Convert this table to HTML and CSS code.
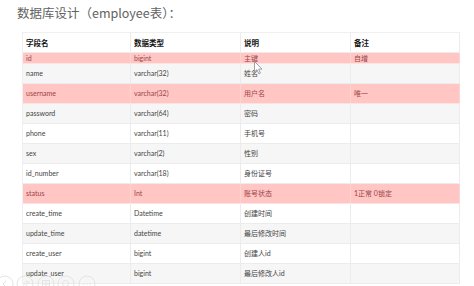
FILE: index.html
```html
<!DOCTYPE html>
<html lang="zh">
<head>
<meta charset="utf-8">
<title>数据库设计</title>
<link rel="stylesheet" href="styles.css">
</head>
<body>
<div class="page">
  <h1 class="title">数据库设计（employee表）：</h1>
  <table class="schema">
    <colgroup><col class="c1"><col class="c2"><col class="c3"><col class="c4"></colgroup>
    <thead>
      <tr class="head"><th>字段名</th><th>数据类型</th><th>说明</th><th>备注</th></tr>
    </thead>
    <tbody>
      <tr class="hl short"><td>id</td><td>bigint</td><td>主键</td><td>自增</td></tr>
      <tr class="alt"><td>name</td><td>varchar(32)</td><td>姓名</td><td></td></tr>
      <tr class="hl"><td>username</td><td>varchar(32)</td><td>用户名</td><td>唯一</td></tr>
      <tr class="alt"><td>password</td><td>varchar(64)</td><td>密码</td><td></td></tr>
      <tr><td>phone</td><td>varchar(11)</td><td>手机号</td><td></td></tr>
      <tr class="alt"><td>sex</td><td>varchar(2)</td><td>性别</td><td></td></tr>
      <tr><td>id_number</td><td>varchar(18)</td><td>身份证号</td><td></td></tr>
      <tr class="hl"><td>status</td><td>Int</td><td>账号状态</td><td>1正常 0锁定</td></tr>
      <tr><td>create_time</td><td>Datetime</td><td>创建时间</td><td></td></tr>
      <tr class="alt"><td>update_time</td><td>datetime</td><td>最后修改时间</td><td></td></tr>
      <tr><td>create_user</td><td>bigint</td><td>创建人id</td><td></td></tr>
      <tr class="alt"><td>update_user</td><td>bigint</td><td>最后修改人id</td><td></td></tr>
    </tbody>
  </table>
</div>

<svg class="cursor" width="9" height="14" viewBox="0 0 9 14" aria-hidden="true">
  <path d="M0.5 0.5 L0.5 11 L3 8.6 L4.8 12.8 L6.4 12.1 L4.7 8.1 L8 8.1 Z" fill="#fff" stroke="#8a8a8a" stroke-width="0.8" stroke-linejoin="round"/>
</svg>

<svg class="toolbar" width="100" height="16" viewBox="0 0 100 16" aria-hidden="true">
  <g fill="none" stroke="#e4e4e4" stroke-width="1">
    <circle cx="5" cy="12" r="8"/>
    <path d="M6 9 L3 12 L6 15"/>
    <circle cx="25" cy="12" r="8"/>
    <path d="M22 15 L27 9 L29 10.5 L24 16"/>
    <circle cx="46" cy="12" r="8"/>
    <rect x="42.5" y="8.5" width="7" height="7"/>
    <path d="M46 8.5 V15.5 M42.5 12 H49.5"/>
    <circle cx="66" cy="12" r="8"/>
    <circle cx="65.5" cy="11.5" r="3"/>
    <path d="M67.7 13.7 L70 16"/>
    <circle cx="87" cy="12" r="8"/>
    <path d="M83.5 12.5 h0.8 M86.6 12.5 h0.8 M89.7 12.5 h0.8" stroke-width="1.3"/>
  </g>
</svg>
</body>
</html>
```

FILE: styles.css
```css
html, body {
  margin: 0;
  padding: 0;
  background: #ffffff;
}

body {
  width: 474px;
  height: 286px;
  overflow: hidden;
  position: relative;
}

.page {
  padding: 5px 0 0 17px;
}

.title {
  margin: 0;
  font-family: "Noto Sans CJK SC", "Noto Sans", sans-serif;
  font-weight: 400;
  font-size: 12.5px;
  line-height: 16px;
  color: #626262;
}

.schema {
  margin: 11px 0 0 5px;
  width: 437px;
  table-layout: fixed;
  border-collapse: collapse;
  font-family: Lato, "Noto Sans CJK SC", sans-serif;
  font-size: 7px;
  color: #444;
  border: 1px solid #f0f0f0;
}

.c1 { width: 108px; }
.c2 { width: 110px; }
.c3 { width: 110px; }
.c4 { width: 109px; }

.schema th,
.schema td {
  height: 19px;
  padding: 0 0 0 3px;
  text-align: left;
  vertical-align: middle;
  white-space: nowrap;
  border-right: 1px solid #ececec;
  border-bottom: 1px solid #ececec;
  line-height: 9px;
}

.schema th {
  font-family: "Noto Sans CJK SC", Lato, sans-serif;
  font-weight: 700;
  font-size: 7.5px;
  color: #111;
  background: #fff;
}

.alt td {
  background: #f6f6f6;
}

.hl td {
  background: #ffc6c4;
  color: #9a4444;
  border-bottom-color: #fbe3e2;
  border-right-color: #fbd4d2;
}

.short td {
  height: 10px;
}

.cursor {
  position: absolute;
  left: 254px;
  top: 61px;
}

.toolbar {
  position: absolute;
  left: 0;
  top: 272px;
}
```
